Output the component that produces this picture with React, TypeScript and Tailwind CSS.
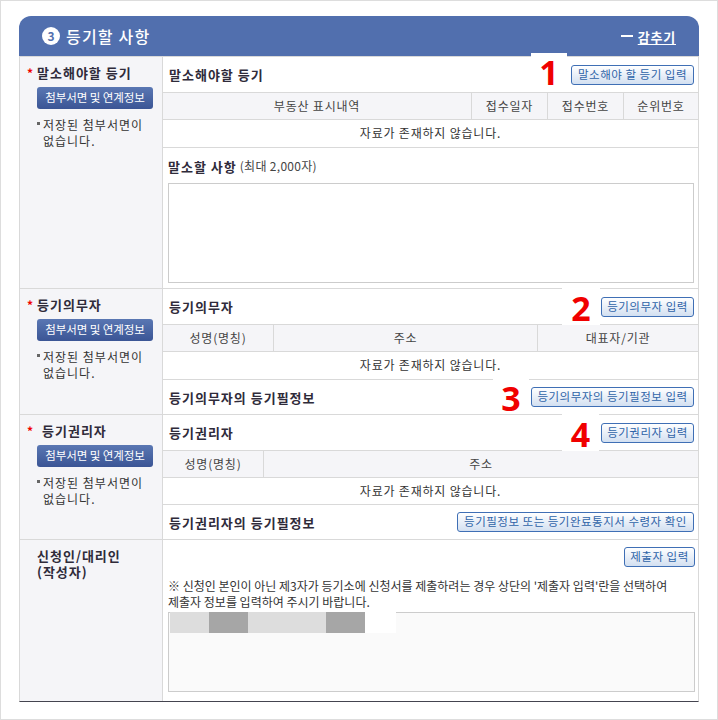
import React from 'react';

const FONT = "font-['Noto_Sans_CJK_KR','Noto_Sans',sans-serif]";

function SmallButton({ children, className = '' }: { children: React.ReactNode; className?: string }) {
  return (
    <button className={`h-5 rounded-[3px] border border-[#3f6fb5] bg-gradient-to-b from-white to-[#d3e0f1] text-[11.5px] leading-none tracking-[0.5px] text-[#2f64a8] whitespace-nowrap ${className}`}>
      {children}
    </button>
  );
}

function Marker({ n, className }: { n: string; className: string }) {
  return (
    <div className={`absolute flex items-center justify-center bg-white pt-[2px] text-[34px] font-bold leading-none text-[#f00000] font-['Open_Sans',sans-serif] ${className}`}>
      {n}
    </div>
  );
}

function SideCell({ label, labelClass = '' }: { label: string; labelClass?: string }) {
  return (
    <div className="w-[143px] shrink-0 border-r border-[#d9d9d9] bg-[#f5f5f8] pt-[7px]">
      <div className="flex h-[17px] items-center pl-[7px]">
        <span className="w-[10px] text-[12px] font-bold leading-none text-[#f00000]">*</span>
        <span className={`text-[13px] font-bold leading-none tracking-[1px] text-[#2f2b3a] ${labelClass}`}>{label}</span>
      </div>
      <button className="mt-[6px] ml-[17px] h-[22px] w-[116px] rounded-[3px] bg-gradient-to-b from-[#5a77b3] to-[#3b5595] text-[11.5px] leading-none tracking-[-0.1px] text-white">
        첨부서면 및 연계정보
      </button>
      <div className="mt-[8px] ml-[17px] flex text-[12px] leading-[16px] tracking-[1px] text-[#333]">
        <span className="mt-[5px] mr-[3px] h-[3px] w-[3px] shrink-0 bg-[#666]" />
        <span className="w-[105px]">저장된 첨부서면이 없습니다.</span>
      </div>
    </div>
  );
}

function TitleRow({ title, children, className = 'h-[36px] border-b border-[#d9d9d9]' }: { title: string; children?: React.ReactNode; className?: string }) {
  return (
    <div className={`relative flex items-center justify-between pl-[6px] pr-[4px] ${className}`}>
      <span className="text-[13px] font-bold leading-none tracking-[1px] text-[#2f2b3a]">{title}</span>
      {children}
    </div>
  );
}

function DataTable({ cols, emptyClass = 'h-[28px]' }: { cols: { label: string; w: string }[]; emptyClass?: string }) {
  return (
    <>
      <div className="flex h-[27px] border-b border-[#d9d9d9] bg-[#f5f5f8]">
        {cols.map((c, i) => (
          <div key={c.label} className={`flex items-center justify-center text-[12px] tracking-[0.8px] text-[#444] ${c.w} ${i < cols.length - 1 ? 'border-r border-[#d9d9d9]' : ''}`}>
            {c.label}
          </div>
        ))}
      </div>
      <div className={`flex items-center justify-center border-b border-[#d9d9d9] pb-[1px] text-[12px] tracking-[0.8px] text-[#333] ${emptyClass}`}>
        자료가 존재하지 않습니다.
      </div>
    </>
  );
}

export default function App() {
  return (
    <div className={`box-border h-[720px] w-[718px] overflow-hidden border border-[#dddddd] bg-white pl-[18px] pt-[15px] ${FONT}`}>
      <div className="w-[680px]">
        <div className="flex h-[40px] items-center justify-between rounded-t-[12px] bg-[#516fae] pl-[23px] pr-[23px]">
          <div className="flex items-center">
            <span className="flex h-[18px] w-[18px] items-center justify-center rounded-full bg-white text-[12px] font-bold leading-none text-[#516fae]">3</span>
            <span className="ml-[6px] pb-[1px] text-[16px] font-medium leading-none tracking-[1.2px] text-white">등기할 사항</span>
          </div>
          <div className="flex items-center">
            <span className="h-[2px] w-[12px] bg-white" />
            <span className="ml-[5px] text-[13px] font-bold leading-none tracking-[0.8px] text-white underline underline-offset-2">감추기</span>
          </div>
        </div>

        <div className="border-x border-b border-t border-[#d9d9d9] border-b-[#44444f]">
          {/* 말소해야할 등기 */}
          <div className="flex h-[232px] border-b border-[#d9d9d9]">
            <SideCell label="말소해야할 등기" />
            <div className="min-w-0 flex-1">
              <TitleRow title="말소해야할 등기">
                <Marker n="1" className="left-[368px] -top-[4px] h-[35px] w-[36px]" />
                <SmallButton className="w-[123px]">말소해야 할 등기 입력</SmallButton>
              </TitleRow>
              <DataTable
                cols={[
                  { label: '부동산 표시내역', w: 'w-[309px]' },
                  { label: '접수일자', w: 'w-[76px]' },
                  { label: '접수번호', w: 'w-[76px]' },
                  { label: '순위번호', w: 'flex-1' },
                ]}
              />
              <div className="pl-[5px] pr-[4px] pt-[10px]">
                <div className="flex h-[16px] items-center text-[12px] leading-none">
                  <span className="text-[13px] font-bold tracking-[1px] text-[#2f2b3a]">말소할 사항</span>
                  <span className="ml-[3px] tracking-[0.3px] text-[#444]">(최대 2,000자)</span>
                </div>
                <div className="mt-[9px] h-[100px] border border-[#cccccc] bg-white" />
              </div>
            </div>
          </div>

          {/* 등기의무자 */}
          <div className="flex h-[126px] border-b border-[#d9d9d9]">
            <SideCell label="등기의무자" />
            <div className="min-w-0 flex-1">
              <TitleRow title="등기의무자">
                <Marker n="2" className="left-[399px] -top-[1px] h-[37px] w-[38px]" />
                <SmallButton className="w-[93px]">등기의무자 입력</SmallButton>
              </TitleRow>
              <DataTable
                cols={[
                  { label: '성명(명칭)', w: 'w-[111px]' },
                  { label: '주소', w: 'w-[264px]' },
                  { label: '대표자/기관', w: 'flex-1' },
                ]}
              />
              <TitleRow title="등기의무자의 등기필정보" className="h-[34px]">
                <Marker n="3" className="left-[330px] -top-[1px] h-[35px] w-[36px]" />
                <SmallButton className="w-[163px]">등기의무자의 등기필정보 입력</SmallButton>
              </TitleRow>
            </div>
          </div>

          {/* 등기권리자 */}
          <div className="flex h-[125px] border-b border-[#d9d9d9]">
            <SideCell label="등기권리자" labelClass="ml-[5px]" />
            <div className="min-w-0 flex-1">
              <TitleRow title="등기권리자">
                <Marker n="4" className="left-[399px] -top-[1px] h-[37px] w-[37px]" />
                <SmallButton className="w-[93px]">등기권리자 입력</SmallButton>
              </TitleRow>
              <DataTable
                emptyClass="h-[27px]"
                cols={[
                  { label: '성명(명칭)', w: 'w-[101px]' },
                  { label: '주소', w: 'flex-1' },
                ]}
              />
              <TitleRow title="등기권리자의 등기필정보" className="h-[34px]">
                <SmallButton className="w-[237px]">등기필정보 또는 등기완료통지서 수령자 확인</SmallButton>
              </TitleRow>
            </div>
          </div>

          {/* 신청인/대리인 */}
          <div className="flex h-[161px]">
            <div className="w-[143px] shrink-0 border-r border-[#d9d9d9] bg-[#f5f5f8] pl-[17px] pt-[8px] text-[13px] font-bold leading-[16px] tracking-[1px] text-[#2f2b3a]">
              신청인/대리인
              <br />
              (작성자)
            </div>
            <div className="min-w-0 flex-1 pl-[5px] pr-[3px] pt-[7px]">
              <div className="flex justify-end">
                <SmallButton className="w-[71px]">제출자 입력</SmallButton>
              </div>
              <p className="mt-[11px] whitespace-nowrap text-[12px] leading-[16px] text-[#333]">
                ※ 신청인 본인이 아닌 제3자가 등기소에 신청서를 제출하려는 경우 상단의 '제출자 입력'란을 선택하여
                <br />
                제출자 정보를 입력하여 주시기 바랍니다.
              </p>
              <div className="relative mt-[2px] h-[80px] border border-[#cccccc] bg-[#fafafa]">
                <div className="absolute left-[1px] -top-[1px] flex h-[21px]">
                  <span className="w-[39px] bg-[#dddddd]" />
                  <span className="w-[39px] bg-[#a6a6a6]" />
                  <span className="w-[78px] bg-[#dddddd]" />
                  <span className="w-[39px] bg-[#a6a6a6]" />
                  <span className="w-[31px] bg-white" />
                </div>
              </div>
            </div>
          </div>
        </div>
      </div>
    </div>
  );
}
